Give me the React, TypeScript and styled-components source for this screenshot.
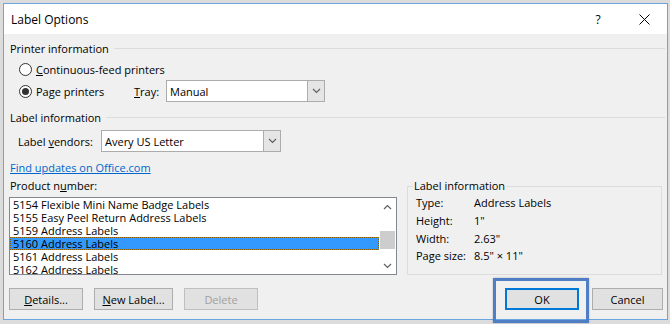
import styled, { createGlobalStyle } from "styled-components";

const GlobalStyle = createGlobalStyle`
  html, body {
    margin: 0;
    padding: 0;
    background: #dcdcdc;
  }
  body {
    font-family: "Open Sans", "Noto Sans", sans-serif;
    font-size: 11px;
    color: #000;
  }
`;

const Screen = styled.div`
  width: 670px;
  height: 324px;
  padding: 3px 0 0 3px;
  box-sizing: border-box;
  overflow: hidden;
`;

const Window = styled.div`
  position: relative;
  width: 665px;
  height: 317px;
  box-sizing: border-box;
  border: 1px solid #6aa5de;
  background: #f0f0f0;
  display: flex;
  flex-direction: column;
`;

const TitleBar = styled.div`
  height: 30px;
  background: #fff;
  display: flex;
  align-items: center;
  padding-left: 7px;
  font-size: 12px;
`;

const Title = styled.div`
  flex: 1;
`;

const TitleButton = styled.div`
  width: 46px;
  height: 30px;
  display: flex;
  align-items: center;
  justify-content: center;
  font-size: 12px;
`;

const Body = styled.div`
  flex: 1;
  padding: 0 4px 0 5px;
  display: flex;
  flex-direction: column;
`;

const SectionHeader = styled.div<{ $top: number }>`
  display: flex;
  align-items: center;
  height: 16px;
  margin-top: ${(p) => p.$top}px;
  padding-left: 1px;
  margin-right: -2px;
  &::after {
    content: "";
    flex: 1;
    height: 1px;
    background: #dcdcdc;
    margin-left: 5px;
  }
`;

const Row = styled.div<{ $top: number; $indent: number; $height: number }>`
  display: flex;
  align-items: center;
  height: ${(p) => p.$height}px;
  margin-top: ${(p) => p.$top}px;
  padding-left: ${(p) => p.$indent}px;
`;

const RadioCircle = styled.span<{ $checked?: boolean }>`
  width: 11px;
  height: 11px;
  border: 1px solid #333;
  border-radius: 50%;
  background: #fff;
  display: flex;
  align-items: center;
  justify-content: center;
  margin-right: 4px;
  &::after {
    content: "";
    width: 7px;
    height: 7px;
    border-radius: 50%;
    background: ${(p) => (p.$checked ? "#333" : "transparent")};
  }
`;

const Label = styled.span<{ $width?: number }>`
  display: inline-block;
  width: ${(p) => (p.$width ? `${p.$width}px` : "auto")};
`;

const Combo = styled.div<{ $width: number }>`
  width: ${(p) => p.$width}px;
  height: 22px;
  box-sizing: border-box;
  border: 1px solid #acacac;
  background: #fff;
  display: flex;
  align-items: stretch;
`;

const ComboText = styled.div`
  flex: 1;
  display: flex;
  align-items: center;
  padding-left: 3px;
`;

const ComboButton = styled.div`
  width: 16px;
  background: #e5e5e5;
  border-left: 1px solid #acacac;
  display: flex;
  align-items: center;
  justify-content: center;
`;

const Link = styled.a`
  color: #0066cc;
  text-decoration: underline;
  height: 16px;
  line-height: 16px;
  margin-top: 8px;
  padding-left: 1px;
`;

const Main = styled.div`
  display: grid;
  grid-template-columns: 388px 255px;
  column-gap: 10px;
  margin-top: 2px;
`;

const ListColumn = styled.div`
  display: flex;
  flex-direction: column;
`;

const FieldLabel = styled.div`
  height: 16px;
  line-height: 16px;
  padding-left: 1px;
  margin-bottom: 3px;
`;

const ListBox = styled.div`
  height: 78px;
  box-sizing: border-box;
  border: 1px solid #828790;
  background: #fff;
  display: flex;
  overflow: hidden;
`;

const Items = styled.div`
  flex: 1;
  display: flex;
  flex-direction: column;
`;

const Item = styled.div<{ $selected?: boolean }>`
  height: 13px;
  line-height: 13px;
  flex-shrink: 0;
  padding-left: 3px;
  box-sizing: border-box;
  white-space: nowrap;
  background: ${(p) => (p.$selected ? "#3399ff" : "transparent")};
  outline: ${(p) => (p.$selected ? "1px dotted #8a5a00" : "none")};
  outline-offset: -1px;
`;

const ScrollBar = styled.div`
  width: 17px;
  display: flex;
  flex-direction: column;
  align-items: center;
`;

const ScrollArrow = styled.div`
  height: 17px;
  width: 17px;
  display: flex;
  align-items: center;
  justify-content: center;
`;

const ScrollTrack = styled.div`
  flex: 1;
  width: 15px;
  display: flex;
  flex-direction: column;
  padding-top: 16px;
`;

const Thumb = styled.div`
  height: 18px;
  background: #cdcdcd;
`;

const InfoBox = styled.fieldset`
  margin: 0;
  padding: 0 8px 0 8px;
  border: 1px solid #dcdcdc;
  min-width: 0;
  height: 97px;
  box-sizing: border-box;
`;

const InfoLegend = styled.legend`
  padding: 0 1px;
  margin-left: -3px;
  line-height: 16px;
`;

const InfoGrid = styled.div`
  display: grid;
  grid-template-columns: 58px 1fr;
  grid-auto-rows: 17.7px;
  align-items: center;
`;

const Buttons = styled.div`
  display: flex;
  align-items: center;
  margin-top: 13px;
  gap: 11px;
`;

const Spacer = styled.div`
  flex: 1;
`;

const Button = styled.button<{ $width: number; $default?: boolean; $gap?: number }>`
  width: ${(p) => p.$width}px;
  height: 22px;
  box-sizing: border-box;
  font: inherit;
  color: #000;
  background: #e1e1e1;
  border: ${(p) => (p.$default ? "2px solid #0078d7" : "1px solid #adadad")};
  padding: 0;
  margin-left: ${(p) => p.$gap ?? 0}px;
  &:disabled {
    color: #a0a0a0;
    border-color: #bfbfbf;
  }
`;

const Callout = styled.div`
  position: absolute;
  left: 489px;
  top: 274px;
  width: 96px;
  height: 45px;
  box-sizing: border-box;
  border: 3px solid #4f7ec4;
  box-shadow: 0 0 2px rgba(0, 0, 0, 0.25);
  pointer-events: none;
`;

const Chevron = ({ up }: { up?: boolean }) => (
  <svg width="9" height="6" viewBox="0 0 9 6">
    <path
      d={up ? "M1 5 L4.5 1.5 L8 5" : "M1 1 L4.5 4.5 L8 1"}
      fill="none"
      stroke="#606060"
      strokeWidth="1.2"
    />
  </svg>
);

const items = [
  "5154 Flexible Mini Name Badge Labels",
  "5155 Easy Peel Return Address Labels",
  "5159 Address Labels",
  "5160 Address Labels",
  "5161 Address Labels",
  "5162 Address Labels",
];

const info = [
  ["Type:", "Address Labels"],
  ["Height:", "1\""],
  ["Width:", "2.63\""],
  ["Page size:", "8.5\" × 11\""],
];

export default function App() {
  return (
    <Screen>
      <GlobalStyle />
      <Window>
        <TitleBar>
          <Title>Label Options</Title>
          <TitleButton>?</TitleButton>
          <TitleButton>
            <svg width="11" height="11" viewBox="0 0 11 11">
              <path d="M0.5 0.5 L10.5 10.5 M10.5 0.5 L0.5 10.5" stroke="#000" strokeWidth="1" />
            </svg>
          </TitleButton>
        </TitleBar>
        <Body>
          <SectionHeader $top={6}>Printer information</SectionHeader>
          <Row $top={4} $indent={10} $height={18}>
            <RadioCircle />
            <span>
              <u>C</u>ontinuous-feed printers
            </span>
          </Row>
          <Row $top={2} $indent={10} $height={22}>
            <RadioCircle $checked />
            <Label $width={98}>
              Pa<u>g</u>e printers
            </Label>
            <Label $width={32}>
              <u>T</u>ray:
            </Label>
            <Combo $width={159}>
              <ComboText>Manual</ComboText>
              <ComboButton>
                <Chevron />
              </ComboButton>
            </Combo>
          </Row>
          <SectionHeader $top={7}>Label information</SectionHeader>
          <Row $top={5} $indent={9} $height={22}>
            <Label $width={83}>
              Label <u>v</u>endors:
            </Label>
            <Combo $width={180}>
              <ComboText>Avery US Letter</ComboText>
              <ComboButton>
                <Chevron />
              </ComboButton>
            </Combo>
          </Row>
          <Link>Find updates on Office.com</Link>
          <Main>
            <ListColumn>
              <FieldLabel>
                Product n<u>u</u>mber:
              </FieldLabel>
              <ListBox>
                <Items>
                  {items.map((it, i) => (
                    <Item key={it} $selected={i === 3}>
                      {it}
                    </Item>
                  ))}
                </Items>
                <ScrollBar>
                  <ScrollArrow>
                    <Chevron up />
                  </ScrollArrow>
                  <ScrollTrack>
                    <Thumb />
                  </ScrollTrack>
                  <ScrollArrow>
                    <Chevron />
                  </ScrollArrow>
                </ScrollBar>
              </ListBox>
            </ListColumn>
            <InfoBox>
              <InfoLegend>Label information</InfoLegend>
              <InfoGrid>
                {info.flatMap(([k, v]) => [
                  <span key={k}>{k}</span>,
                  <span key={k + "-v"}>{v}</span>,
                ])}
              </InfoGrid>
            </InfoBox>
          </Main>
          <Buttons>
            <Button $width={74}>
              <u>D</u>etails...
            </Button>
            <Button $width={79}>
              <u>N</u>ew Label...
            </Button>
            <Button $width={74} disabled>
              Delete
            </Button>
            <Spacer />
            <Button $width={74} $default>
              OK
            </Button>
            <Button $width={71} $gap={2}>
              Cancel
            </Button>
          </Buttons>
        </Body>
        <Callout />
      </Window>
    </Screen>
  );
}
